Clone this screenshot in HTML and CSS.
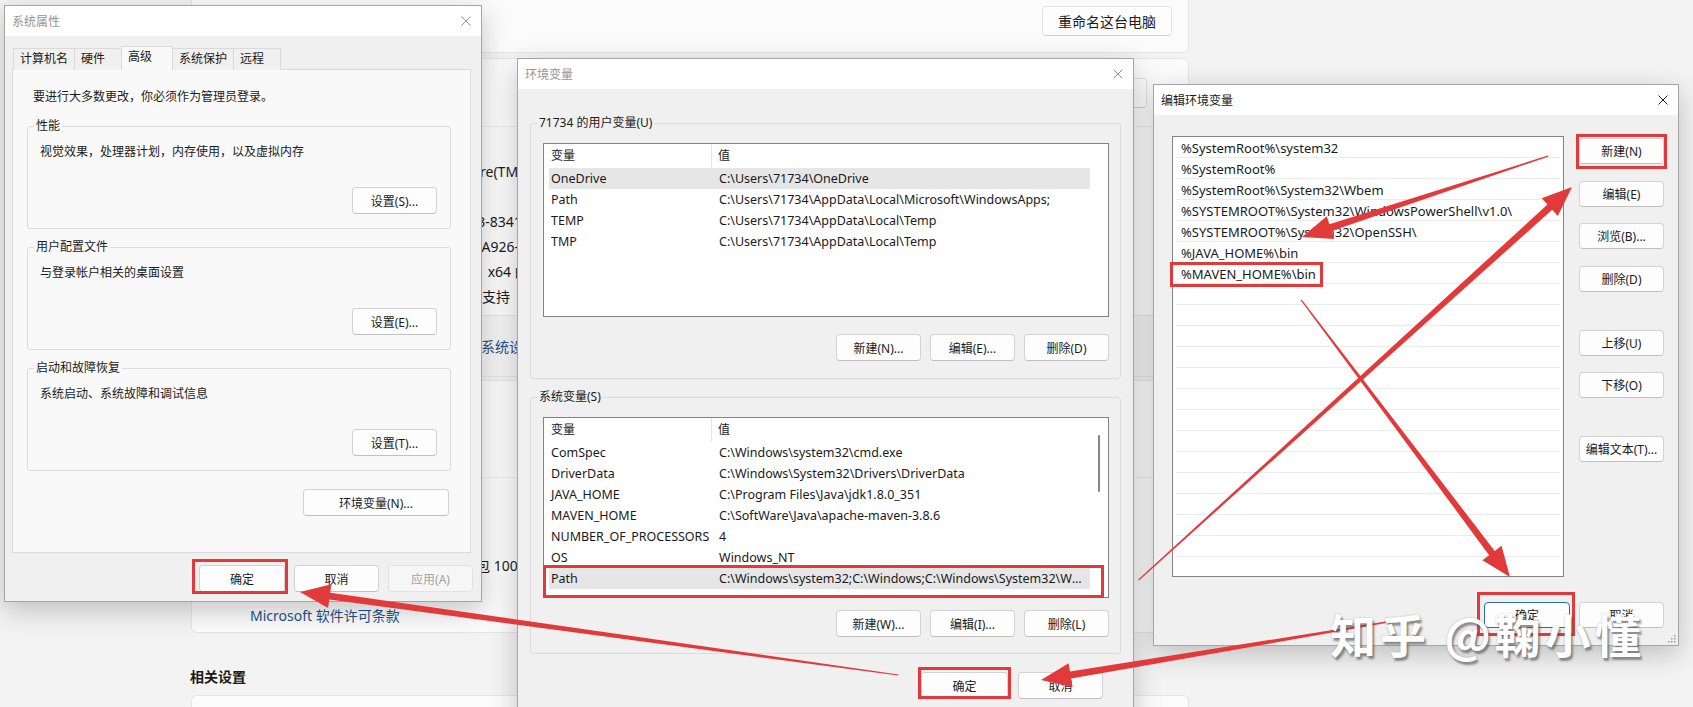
FILE: index.html
```html
<!DOCTYPE html>
<html lang="zh-CN">
    <head>
        <meta charset="utf-8">
        <title>系统属性 - 环境变量</title>
        <link rel="stylesheet" href="styles.css">
    </head>
    <body>
        <!-- settings page behind the dialogs -->
        <div class="settings">
            <div class="card card-top">
                <button class="btn btn-big">重命名这台电脑</button>
            </div>
            <div class="card">
                <div class="card-head">
                    <span class="card-title">设备规格</span>
                    <button class="btn btn-big btn-copy">复制</button>
                </div>
                <div class="spec-rows">
                    <div class="spec"><span class="spec-k">设备名称</span><span>DESK-71</span></div>
                    <div class="spec"><span class="spec-k">处理器</span><span>Intel(R) Core(TM) i5-8250U CPU @ 1.60GHz</span></div>
                    <div class="spec"><span class="spec-k">机带 RAM</span><span>8.00 GB</span></div>
                    <div class="spec"><span class="spec-k">设备 ID</span><span>B7E6A0F43-8341-4C2D-9A5E</span></div>
                    <div class="spec"><span class="spec-k">产品 ID</span><span>00342-30AA926-AAOEM</span></div>
                    <div class="spec"><span class="spec-k">系统类型</span><span>64 位系统，x64 的处理器</span></div>
                    <div class="spec"><span class="spec-k">笔和触控</span><span>无触控输入支持</span></div>
                </div>
                <div class="links">
                    <span>相关链接</span>
                    <a>域或工作组</a>
                    <a>系统保护</a>
                    <a>高级系统设置</a>
                </div>
            </div>
            <div class="card card-win">
                <div class="card-head card-head-tall">
                    <span class="card-title">Windows 规格</span>
                </div>
                <div class="spec-rows spec-rows-win">
                    <div class="spec"><span class="spec-k">版本</span><span>家庭版</span></div>
                    <div class="spec"><span class="spec-k">版本号</span><span>22H2</span></div>
                    <div class="spec"><span class="spec-k">安装日期</span><span>22/11/20</span></div>
                    <div class="spec"><span class="spec-k">体验</span><span>功能体验包 1000.22636.1000.0</span></div>
                    <div class="spec spec-link"><a>Microsoft 服务协议</a></div>
                    <div class="spec spec-link"><a>Microsoft 软件许可条款</a></div>
                </div>
            </div>
            <h4 class="section-title">相关设置</h4>
            <div class="card card-bottom"></div>
        </div>

        <!-- 系统属性 -->
        <div class="dlg dlg-sys">
            <div class="dlg-title">
                <span>系统属性</span>
                <svg class="close" width="10" height="10" viewBox="0 0 10 10"><path d="M0.5 0.5l9 9M9.5 0.5l-9 9" stroke="currentColor" stroke-width="1"/></svg>
            </div>
            <div class="dlg-body">
                <div class="tabs">
                    <div class="tab">计算机名</div>
                    <div class="tab">硬件</div>
                    <div class="tab active">高级</div>
                    <div class="tab">系统保护</div>
                    <div class="tab">远程</div>
                </div>
                <div class="tab-panel">
                    <p class="note">要进行大多数更改，你必须作为管理员登录。</p>
                    <fieldset class="group">
                        <legend>性能</legend>
                        <p class="group-desc">视觉效果，处理器计划，内存使用，以及虚拟内存</p>
                        <div class="group-actions"><button class="btn">设置(S)...</button></div>
                    </fieldset>
                    <fieldset class="group">
                        <legend>用户配置文件</legend>
                        <p class="group-desc">与登录帐户相关的桌面设置</p>
                        <div class="group-actions"><button class="btn">设置(E)...</button></div>
                    </fieldset>
                    <fieldset class="group">
                        <legend>启动和故障恢复</legend>
                        <p class="group-desc">系统启动、系统故障和调试信息</p>
                        <div class="group-actions"><button class="btn">设置(T)...</button></div>
                    </fieldset>
                    <div class="panel-actions"><button class="btn btn-env">环境变量(N)...</button></div>
                </div>
                <div class="dlg-actions">
                    <button class="btn btn-ok">确定</button>
                    <button class="btn">取消</button>
                    <button class="btn" disabled>应用(A)</button>
                </div>
            </div>
        </div>

        <!-- 环境变量 -->
        <div class="dlg dlg-env">
            <div class="dlg-title">
                <span>环境变量</span>
                <svg class="close" width="10" height="10" viewBox="0 0 10 10"><path d="M0.5 0.5l9 9M9.5 0.5l-9 9" stroke="currentColor" stroke-width="1"/></svg>
            </div>
            <div class="env-body">
                <fieldset class="group group-env">
                    <legend>71734 的用户变量(U)</legend>
                    <div class="lv">
                        <div class="lv-main">
                            <div class="lv-head"><span>变量</span><span>值</span></div>
                            <div class="lv-row sel"><span>OneDrive</span><span>C:\Users\71734\OneDrive</span></div>
                            <div class="lv-row"><span>Path</span><span>C:\Users\71734\AppData\Local\Microsoft\WindowsApps;</span></div>
                            <div class="lv-row"><span>TEMP</span><span>C:\Users\71734\AppData\Local\Temp</span></div>
                            <div class="lv-row"><span>TMP</span><span>C:\Users\71734\AppData\Local\Temp</span></div>
                        </div>
                        <div class="lv-scroll"></div>
                    </div>
                    <div class="group-actions">
                        <button class="btn">新建(N)...</button>
                        <button class="btn">编辑(E)...</button>
                        <button class="btn">删除(D)</button>
                    </div>
                </fieldset>
                <fieldset class="group group-env group-sys">
                    <legend>系统变量(S)</legend>
                    <div class="lv lv-sys">
                        <div class="lv-main">
                            <div class="lv-head"><span>变量</span><span>值</span></div>
                            <div class="lv-row"><span>ComSpec</span><span>C:\Windows\system32\cmd.exe</span></div>
                            <div class="lv-row"><span>DriverData</span><span>C:\Windows\System32\Drivers\DriverData</span></div>
                            <div class="lv-row"><span>JAVA_HOME</span><span>C:\Program Files\Java\jdk1.8.0_351</span></div>
                            <div class="lv-row"><span>MAVEN_HOME</span><span>C:\SoftWare\Java\apache-maven-3.8.6</span></div>
                            <div class="lv-row"><span>NUMBER_OF_PROCESSORS</span><span>4</span></div>
                            <div class="lv-row"><span>OS</span><span>Windows_NT</span></div>
                            <div class="lv-row sel"><span>Path</span><span>C:\Windows\system32;C:\Windows;C:\Windows\System32\Wbem;C:\Windows\System32\WindowsPowerShell\v1.0\</span></div>
                        </div>
                        <div class="lv-scroll"><div class="thumb"></div></div>
                    </div>
                    <div class="group-actions">
                        <button class="btn">新建(W)...</button>
                        <button class="btn">编辑(I)...</button>
                        <button class="btn">删除(L)</button>
                    </div>
                </fieldset>
                <div class="dlg-actions env-actions">
                    <button class="btn btn-ok2">确定</button>
                    <button class="btn">取消</button>
                </div>
            </div>
        </div>

        <!-- 编辑环境变量 -->
        <div class="dlg dlg-edit">
            <div class="dlg-title title-active">
                <span>编辑环境变量</span>
                <svg class="close" width="10" height="10" viewBox="0 0 10 10"><path d="M0.5 0.5l9 9M9.5 0.5l-9 9" stroke="currentColor" stroke-width="1"/></svg>
            </div>
            <div class="edit-body">
                <div class="ev-list">
                    <div class="ev-rows">
                        <div class="ev-row">%SystemRoot%\system32</div>
                        <div class="ev-row">%SystemRoot%</div>
                        <div class="ev-row">%SystemRoot%\System32\Wbem</div>
                        <div class="ev-row">%SYSTEMROOT%\System32\WindowsPowerShell\v1.0\</div>
                        <div class="ev-row">%SYSTEMROOT%\System32\OpenSSH\</div>
                        <div class="ev-row">%JAVA_HOME%\bin</div>
                        <div class="ev-row">%MAVEN_HOME%\bin</div>
                    </div>
                </div>
                <div class="ev-btns">
                    <button class="btn btn-s">新建(N)</button>
                    <button class="btn btn-s">编辑(E)</button>
                    <button class="btn btn-s">浏览(B)...</button>
                    <button class="btn btn-s">删除(D)</button>
                    <button class="btn btn-s gap">上移(U)</button>
                    <button class="btn btn-s">下移(O)</button>
                    <button class="btn btn-s gap">编辑文本(T)...</button>
                </div>
            </div>
            <div class="dlg-actions edit-actions">
                <button class="btn btn-s btn-ok focus">确定</button>
                <button class="btn btn-s">取消</button>
            </div>
            <svg class="grip" width="8" height="8" viewBox="0 0 8 8">
                <g fill="#9a9a9a"><rect x="6" y="0" width="1.5" height="1.5"/><rect x="3" y="3" width="1.5" height="1.5"/><rect x="6" y="3" width="1.5" height="1.5"/><rect x="0" y="6" width="1.5" height="1.5"/><rect x="3" y="6" width="1.5" height="1.5"/><rect x="6" y="6" width="1.5" height="1.5"/></g>
            </svg>
        </div>

        <!-- red annotations drawn over the screenshot -->
        <svg class="marks" width="1693" height="707" viewBox="0 0 1693 707">
            <g fill="none" stroke="#e23a3a" stroke-width="3">
                <rect x="193.5" y="560.5" width="93" height="32"/>
                <rect x="544.5" y="566.5" width="558" height="30"/>
                <rect x="919.5" y="668.5" width="90" height="29"/>
                <rect x="1577.5" y="135.5" width="88" height="32"/>
                <rect x="1171.5" y="263.5" width="150" height="22"/>
                <rect x="1478.5" y="593.5" width="95" height="41"/>
            </g>
            <g fill="#e23a3a">
                <g transform="translate(1302 237) rotate(-18.2)"><polygon points="0,0 30,-12 30,-3.5 259,-0.6 259,0.6 30,3.5 30,12"/></g>
                <g transform="translate(1572 187) rotate(137.8)"><polygon points="0,0 30,-12 30,-3.5 585,-0.6 585,0.6 30,3.5 30,12"/></g>
                <g transform="translate(1510 577) rotate(-127)"><polygon points="0,0 30,-12 30,-3.5 347,-0.6 347,0.6 30,3.5 30,12"/></g>
                <g transform="translate(1041 680) rotate(-9.5)"><polygon points="0,0 30,-12 30,-3.5 370,-0.6 370,0.6 30,3.5 30,12"/></g>
                <g transform="translate(300 592) rotate(7.9)"><polygon points="0,0 30,-12 30,-3.5 604,-0.6 604,0.6 30,3.5 30,12"/></g>
            </g>
        </svg>

        <div class="watermark">知乎 @鞠小懂</div>
    </body>
</html>
```

FILE: styles.css
```css
* {
    box-sizing: border-box;
}
body {
    margin: 0;
    width: 1693px;
    height: 707px;
    overflow: hidden;
    position: relative;
    background: #f3f3f3;
    font-family: "Noto Sans", "Noto Sans CJK SC", sans-serif;
    font-size: 12px;
    color: #1a1a1a;
}
p {
    margin: 0;
}

/* ---- settings page ---- */
.settings {
    width: 1189px;
    padding-left: 191px;
    display: flex;
    flex-direction: column;
    font-size: 14px;
}
.card {
    background: #fbfbfb;
    border: 1px solid #e5e5e5;
    border-radius: 6px;
    margin-top: 5px;
}
.card-top {
    margin-top: -8px;
    height: 61px;
    display: flex;
    justify-content: flex-end;
    align-items: flex-start;
    padding: 13px 16px 0 0;
}
.card-head {
    height: 68px;
    display: flex;
    align-items: center;
    justify-content: space-between;
    padding: 0 16px 0 20px;
    border-bottom: 1px solid #ececec;
}
.card-head-tall {
    height: 97px;
}
.card-title {
    font-weight: 600;
}
.spec-rows {
    padding: 7px 0 6px;
}
.spec {
    display: flex;
    height: 25px;
    line-height: 25px;
    padding-left: 40px;
    white-space: nowrap;
}
.spec-k {
    width: 180px;
    flex-shrink: 0;
}
.spec-rows-win {
    padding: 0 0 4px;
}
.spec-rows-win .spec {
    padding-left: 48px;
}
.spec-rows-win .spec-link {
    padding-left: 58px;
}
.links {
    height: 61px;
    display: flex;
    align-items: center;
    gap: 16px;
    padding-left: 31px;
    background: #f4f4f4;
    border-top: 1px solid #e5e5e5;
    border-radius: 0 0 6px 6px;
}
.links a, .spec-link a {
    color: #1d5288;
}
.card-win {
    margin-top: 3px;
}
.section-title {
    margin: 34px 0 0 -1px;
    line-height: 20px;
    font-size: 14px;
    font-weight: 600;
}
.card-bottom {
    margin-top: 8px;
    height: 60px;
}

/* ---- buttons ---- */
.btn {
    width: 85px;
    height: 27px;
    padding: 0;
    font: inherit;
    font-size: 12px;
    color: #1a1a1a;
    background: #fdfdfd;
    border: 1px solid #d3d3d3;
    border-bottom-color: #c0c0c0;
    border-radius: 4px;
    white-space: nowrap;
}
.btn[disabled] {
    color: #a3a3a3;
    background: #f6f6f6;
    border-color: #e2e2e2;
}
.btn-big {
    width: auto;
    height: 30px;
    padding: 0 15px;
    font-size: 14px;
    border-color: #e3e3e3;
    border-bottom-color: #d2d2d2;
}
.btn-copy {
    width: 60px;
    margin-right: 25px;
}
.btn-env {
    width: 146px;
}
.btn-ok {
    width: 86px;
}
.btn-ok2 {
    width: 87px;
}
.btn-s {
    height: 26px;
}
.btn.focus {
    border: 1px solid #2a6db2;
}

/* ---- dialogs ---- */
.dlg {
    position: absolute;
    background: #f0f0f0;
    border: 1px solid #a5a5a5;
    box-shadow: 0 8px 26px rgba(0, 0, 0, 0.22);
    display: flex;
    flex-direction: column;
    overflow: hidden;
}
.dlg-sys {
    left: 4px;
    top: 5px;
    width: 478px;
    height: 597px;
}
.dlg-env {
    left: 517px;
    top: 58px;
    width: 617px;
    height: 690px;
}
.dlg-edit {
    left: 1153px;
    top: 84px;
    width: 526px;
    height: 562px;
}
.dlg-title {
    height: 30px;
    flex-shrink: 0;
    background: #fff;
    display: flex;
    align-items: center;
    justify-content: space-between;
    padding: 0 10px 0 7px;
    color: #959595;
}
.title-active {
    color: #1a1a1a;
}
.dlg-actions {
    display: flex;
    justify-content: flex-end;
    gap: 9px;
    margin-top: 12px;
    padding-right: 8px;
}

/* 系统属性 */
.dlg-body {
    padding: 10px 0 0 7px;
}
.tabs {
    display: flex;
    align-items: flex-end;
    height: 24px;
    margin: 0 0 -1px 1px;
    position: relative;
    z-index: 1;
}
.tab {
    height: 22px;
    min-width: 48px;
    padding: 0 6px;
    line-height: 20px;
    border: 1px solid #dadada;
    border-bottom: none;
    margin-right: -1px;
    background: #f0f0f0;
}
.tab.active {
    height: 24px;
    min-width: 52px;
    line-height: 20px;
    background: #f9f9f9;
}
.tab-panel {
    width: 459px;
    height: 484px;
    background: #f9f9f9;
    border: 1px solid #dadada;
    padding: 19px 19px 0 14px;
}
.note {
    padding-left: 6px;
    line-height: 16px;
}
.group {
    margin: 13px 0 0;
    width: 424px;
    padding: 0 13px 14px 6px;
    border: 1px solid #dcdcdc;
    border-radius: 3px;
}
.group + .group {
    margin-top: 10px;
}
.group legend {
    padding: 0 2px;
    line-height: 16px;
}
.group-desc {
    margin: 10px 0 0 6px;
    line-height: 16px;
}
.group-actions {
    display: flex;
    justify-content: flex-end;
    gap: 9px;
    margin-top: 27px;
}
.panel-actions {
    display: flex;
    justify-content: flex-end;
    margin-top: 18px;
    padding-right: 2px;
}

/* 环境变量 */
.env-body {
    padding: 26px 0 0 12px;
}
.group-env {
    width: 591px;
    margin: 0;
    padding: 0 11px 17px 6px;
}
.group-env + .group-env {
    margin-top: 10px;
}
.group-env .group-actions {
    margin-top: 17px;
}
.group-sys {
    padding-bottom: 16px;
}
.group-sys .group-actions {
    margin-top: 12px;
}
.lv {
    display: flex;
    width: 566px;
    height: 174px;
    margin: 12px 0 0 6px;
    background: #fff;
    border: 1px solid #838383;
    font-size: 12.5px;
}
.lv-sys {
    height: 181px;
}
.lv-main {
    flex: 1;
    min-width: 0;
    overflow: hidden;
}
.lv-scroll {
    width: 18px;
    flex-shrink: 0;
    padding: 17px 0 0 8px;
}
.thumb {
    width: 2px;
    height: 57px;
    border-radius: 1px;
    background: #868686;
}
.lv-head {
    display: flex;
    height: 24px;
    line-height: 24px;
    font-size: 12px;
}
.lv-head span:first-child {
    width: 168px;
    padding-left: 7px;
    border-right: 1px solid #e5e5e5;
}
.lv-head span:last-child {
    padding-left: 6px;
}
.lv-row {
    display: flex;
    height: 21px;
    line-height: 21px;
    margin-left: 5px;
    white-space: nowrap;
}
.lv-row span:first-child {
    width: 163px;
    flex-shrink: 0;
    padding-left: 2px;
    overflow: hidden;
}
.lv-row span:last-child {
    flex: 1;
    min-width: 0;
    padding: 0 6px 0 7px;
    overflow: hidden;
    text-overflow: ellipsis;
}
.lv-row.sel {
    background: #e6e6e6;
}
.env-actions {
    margin-top: 18px;
    padding-right: 30px;
    gap: 10px;
}

/* 编辑环境变量 */
.edit-body {
    display: flex;
    gap: 15px;
    padding: 21px 14px 0 18px;
}
.ev-list {
    width: 392px;
    height: 441px;
    flex-shrink: 0;
    padding: 0 3px;
    background: #fff;
    border: 1px solid #838383;
    font-size: 13px;
    overflow: hidden;
}
.ev-rows {
    height: 100%;
    background: repeating-linear-gradient(to bottom, transparent 0, transparent 20px, #ebebeb 20px, #ebebeb 21px);
}
.ev-row {
    height: 21px;
    padding: 1px 0 0 5px;
    line-height: 20px;
    white-space: nowrap;
}
.ev-btns {
    display: flex;
    flex-direction: column;
    gap: 16.5px;
    padding-top: 2px;
}
.ev-btns .gap {
    margin-top: 21.5px;
}
.edit-actions {
    margin-top: 25px;
    padding-right: 14px;
}
.grip {
    position: absolute;
    right: 2px;
    bottom: 2px;
}

/* ---- annotations ---- */
.marks {
    position: absolute;
    left: 0;
    top: 0;
    pointer-events: none;
}
.watermark {
    position: absolute;
    left: 1330px;
    top: 606px;
    font-family: "Noto Sans CJK SC", sans-serif;
    font-size: 46px;
    line-height: 54px;
    font-weight: 700;
    letter-spacing: 4px;
    color: #fff;
    white-space: nowrap;
    text-shadow: 2px 3px 2px rgba(80, 80, 80, 0.6), 0 0 2px rgba(0, 0, 0, 0.25);
}
```
